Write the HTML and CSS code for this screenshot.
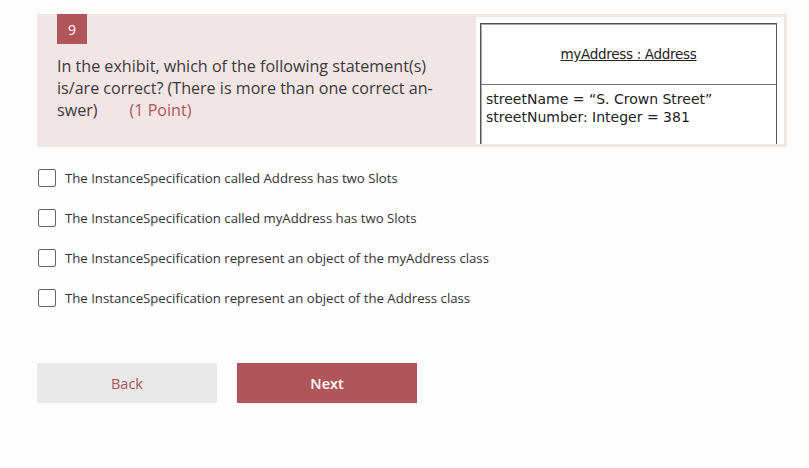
FILE: index.html
```html
<!DOCTYPE html>
<html>
<head>
<meta charset="utf-8">
<link rel="stylesheet" href="styles.css">
</head>
<body>
<div class="page">
  <div class="question">
    <div class="qleft">
      <div class="badge">9</div>
      <div class="qtext">In the exhibit, which of the following statement(s) is/are correct? (There is more than one correct an-<br>swer)<span class="points">(1 Point)</span></div>
    </div>
    <div class="exhibit">
      <div class="uml">
        <div class="uml-head"><span>myAddress : Address</span></div>
        <div class="uml-body">
          <div>streetName = “S. Crown Street”</div>
          <div>streetNumber: Integer = 381</div>
        </div>
      </div>
    </div>
  </div>
  <div class="options">
    <label class="opt"><span class="box"></span><span>The InstanceSpecification called Address has two Slots</span></label>
    <label class="opt"><span class="box"></span><span>The InstanceSpecification called myAddress has two Slots</span></label>
    <label class="opt"><span class="box"></span><span>The InstanceSpecification represent an object of the myAddress class</span></label>
    <label class="opt"><span class="box"></span><span>The InstanceSpecification represent an object of the Address class</span></label>
  </div>
  <div class="buttons">
    <div class="btn back">Back</div>
    <div class="btn next">Next</div>
  </div>
</div>
</body>
</html>
```
FILE: styles.css
```css
html, body {
  margin: 0;
  padding: 0;
  background: #fdfdfd;
  font-family: "Open Sans", "Noto Sans", sans-serif;
  color: #333;
}
.page {
  padding: 14px 0 0 37px;
  width: 750px;
}
.question {
  background: #f2e5e6;
  height: 133px;
  display: flex;
  justify-content: space-between;
}
.qleft {
  padding-left: 20px;
  width: 400px;
}
.badge {
  width: 30px;
  height: 30px;
  background: #b0565a;
  color: #fff;
  font-size: 14px;
  display: flex;
  align-items: center;
  justify-content: center;
}
.qtext {
  margin-top: 11px;
  font-size: 16.1px;
  line-height: 22px;
  color: #3b3b3b;
}
.points {
  color: #b0565a;
  margin-left: 32px;
}
.exhibit {
  margin-top: 3px;
  margin-right: 3px;
  width: 308px;
  height: 127px;
  background: #fff;
  box-sizing: border-box;
  padding: 6px 7px 0 4px;
  overflow: hidden;
}
.uml {
  border: 1px solid #555;
  border-bottom: none;
  box-shadow: inset 1px 1px 0 #aaa;
  height: 130px;
  font-family: "DejaVu Sans", Verdana, sans-serif;
  color: #222;
}
.uml-head {
  height: 60px;
  border-bottom: 1px solid #777;
  display: flex;
  align-items: center;
  justify-content: center;
  font-size: 13.5px;
}
.uml-head span {
  text-decoration: underline;
  letter-spacing: -0.3px;
}
.uml-body {
  padding: 5px 0 0 5px;
  font-size: 14px;
  line-height: 18px;
  letter-spacing: 0;
}
.options {
  margin-top: 22px;
  display: flex;
  flex-direction: column;
  gap: 22px;
}
.opt {
  display: flex;
  align-items: center;
  height: 18px;
  font-size: 13.2px;
  color: #333;
}
.box {
  width: 16px;
  height: 16px;
  border: 1px solid #666;
  border-radius: 2px;
  background: #fff;
  margin-left: 1px;
  margin-right: 9px;
  flex: none;
}
.buttons {
  margin-top: 56px;
  display: flex;
  gap: 20px;
}
.btn {
  width: 180px;
  height: 40px;
  display: flex;
  align-items: center;
  justify-content: center;
  font-size: 14.5px;
}
.back {
  background: #e9e9e9;
  color: #a9575b;
}
.next {
  background: #b0565a;
  color: #fff;
  font-weight: 600;
}
```
